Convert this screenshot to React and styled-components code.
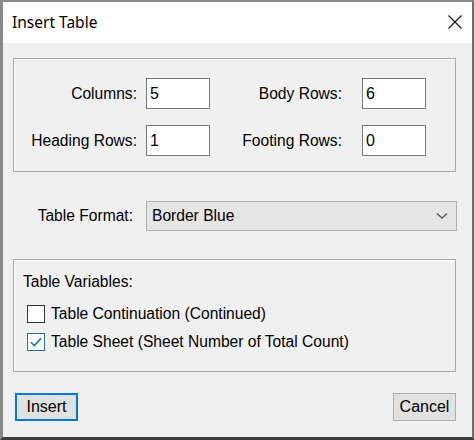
import React from "react";
import styled, { createGlobalStyle } from "styled-components";

const Global = createGlobalStyle`
  html, body { margin: 0; padding: 0; background: #ffffff; }
  body { font-family: "Liberation Sans", Arial, sans-serif; }
  * { box-sizing: border-box; }
`;

const Window = styled.div`
  width: 474px;
  height: 440px;
  display: flex;
  flex-direction: column;
  border-left: 3px solid #8a8a8a;
  border-top: 2px solid #8a8a8a;
  border-right: 2px solid #6e6e6e;
  border-bottom: 3px solid #3c3c3c;
  background: #f0f0f0;
`;

const TitleBar = styled.div`
  height: 41px;
  flex: none;
  background: #ffffff;
  display: flex;
  align-items: center;
  justify-content: space-between;
  padding: 0 9px 0 9px;
`;

const Title = styled.span`
  font-family: "Noto Sans", "Open Sans", sans-serif;
  font-size: 15.5px;
  color: #000;
  margin-top: -2px;
`;

const CloseButton = styled.div`
  width: 16px;
  height: 16px;
  display: flex;
  margin-top: -2px;
`;

const Client = styled.div`
  flex: 1;
  display: flex;
  flex-direction: column;
  padding: 15px 16px 16px 10px;
  font-size: 15.6px;
  color: #000;
`;

const GroupBox = styled.div`
  border: 1px solid #a7a7a7;
  box-shadow: inset 1px 1px 0 #ffffff;
  height: ${(p) => p.$h}px;
  margin-bottom: ${(p) => p.$mb}px;
`;

const FieldGrid = styled.div`
  display: grid;
  grid-template-columns: 132px 64px 152px 64px;
  row-gap: 16px;
  padding: 19px 0 0 0;
  align-items: center;
`;

const Label = styled.div`
  text-align: right;
  padding-right: ${(p) => p.$pr}px;
  white-space: nowrap;
`;

const TextBox = styled.div`
  height: 31px;
  width: 64px;
  background: #ffffff;
  border: 1px solid #7a7a7a;
  display: flex;
  align-items: center;
  padding: 0 0 0 3px;
  font-size: 16px;
`;

const FormatRow = styled.div`
  display: flex;
  align-items: center;
  height: 30px;
  margin-bottom: 28px;
  margin-right: -1px;
`;

const FormatLabel = styled.div`
  width: 120px;
  text-align: right;
  white-space: nowrap;
  margin-right: 13px;
`;

const Combo = styled.div`
  flex: 1;
  height: 30px;
  background: #e5e5e5;
  border: 1px solid #adadad;
  display: flex;
  align-items: center;
  justify-content: space-between;
  padding: 0 8px 0 5px;
  font-size: 15.6px;
`;

const VarsBox = styled(GroupBox)`
  padding: 13px 0 0 9px;
  display: flex;
  flex-direction: column;
`;

const VarsTitle = styled.div`
  height: 18px;
  line-height: 18px;
  margin-bottom: 14px;
`;

const CheckRow = styled.div`
  display: flex;
  align-items: center;
  gap: 6px;
  height: 18px;
  margin-left: 4px;
  margin-bottom: ${(p) => p.$mb}px;
  white-space: nowrap;
`;

const Box = styled.div`
  width: 18px;
  height: 18px;
  background: #ffffff;
  border: 1px solid ${(p) => (p.$checked ? "#2d6ea8" : "#333333")};
  display: flex;
  align-items: center;
  justify-content: center;
`;

const ButtonRow = styled.div`
  display: flex;
  justify-content: space-between;
  padding-left: 2px;
`;

const Button = styled.div`
  width: 63px;
  height: 28px;
  background: #e1e1e1;
  border: ${(p) => (p.$default ? "2px solid #0078d7" : "1px solid #adadad")};
  display: flex;
  align-items: center;
  justify-content: center;
  font-size: 16px;
`;

const Checkbox = ({ checked, label, mb }) => (
  <CheckRow $mb={mb}>
    <Box $checked={checked}>
      {checked && (
        <svg width="14" height="14" viewBox="0 0 14 14">
          <path d="M2 7.2 L5.4 10.6 L12 3.4" fill="none" stroke="#2170b8" strokeWidth="1.6" />
        </svg>
      )}
    </Box>
    <span>{label}</span>
  </CheckRow>
);

export default function App() {
  return (
    <>
      <Global />
      <Window>
        <TitleBar>
          <Title>Insert Table</Title>
          <CloseButton>
            <svg width="16" height="16" viewBox="0 0 16 16">
              <path d="M1.5 1.5 L14.5 14.5 M14.5 1.5 L1.5 14.5" stroke="#111" strokeWidth="1.1" fill="none" />
            </svg>
          </CloseButton>
        </TitleBar>
        <Client>
          <GroupBox $h={114} $mb={29}>
            <FieldGrid>
              <Label $pr={9}>Columns:</Label>
              <TextBox>5</TextBox>
              <Label $pr={20}>Body Rows:</Label>
              <TextBox>6</TextBox>
              <Label $pr={9}>Heading Rows:</Label>
              <TextBox>1</TextBox>
              <Label $pr={20}>Footing Rows:</Label>
              <TextBox>0</TextBox>
            </FieldGrid>
          </GroupBox>
          <FormatRow>
            <FormatLabel>Table Format:</FormatLabel>
            <Combo>
              <span>Border Blue</span>
              <svg width="12" height="8" viewBox="0 0 12 8">
                <path d="M1 1.5 L6 6.2 L11 1.5" fill="none" stroke="#555" strokeWidth="1.3" />
              </svg>
            </Combo>
          </FormatRow>
          <VarsBox $h={113} $mb={21}>
            <VarsTitle>Table Variables:</VarsTitle>
            <Checkbox checked={false} label="Table Continuation (Continued)" mb={10} />
            <Checkbox checked={true} label="Table Sheet (Sheet Number of Total Count)" mb={0} />
          </VarsBox>
          <ButtonRow>
            <Button $default>Insert</Button>
            <Button>Cancel</Button>
          </ButtonRow>
        </Client>
      </Window>
    </>
  );
}
